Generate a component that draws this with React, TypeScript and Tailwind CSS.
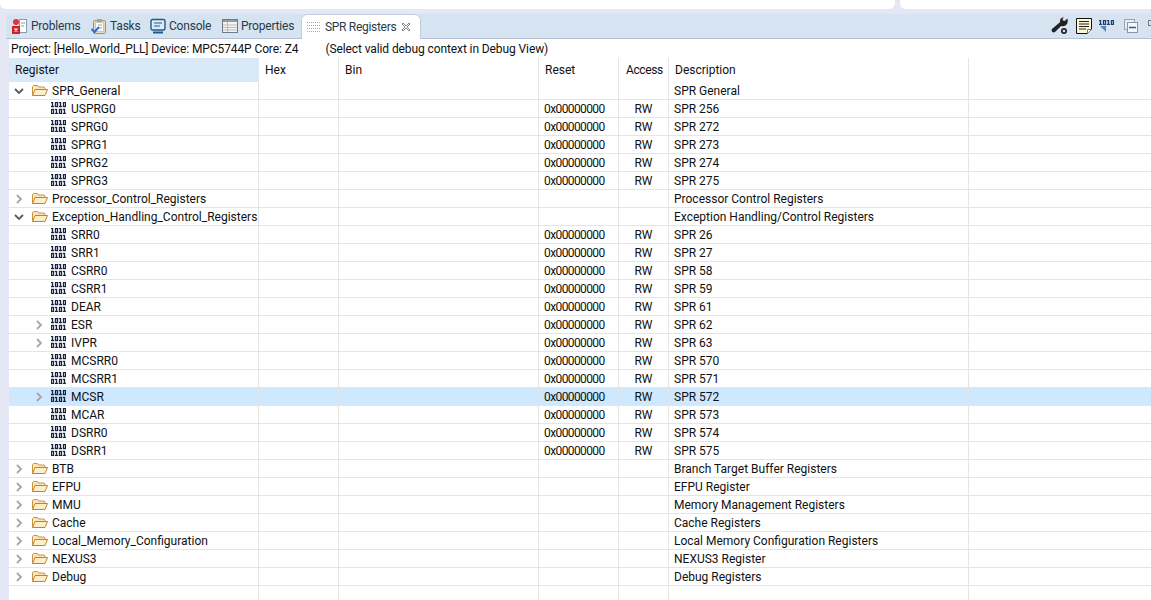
import type { ReactNode } from "react"

type Row = {
  name: string
  depth: 0 | 1
  open?: boolean
  arrow?: boolean
  reset?: string
  access?: string
  desc: string
  selected?: boolean
}

const reg = (name: string, spr: number, arrow?: boolean, selected?: boolean): Row => ({
  name,
  depth: 1,
  arrow,
  selected,
  reset: "0x00000000",
  access: "RW",
  desc: `SPR ${spr}`,
})

const group = (name: string, desc: string, open?: boolean): Row => ({ name, depth: 0, open, arrow: true, desc })

const rows: Row[] = [
  group("SPR_General", "SPR General", true),
  reg("USPRG0", 256),
  reg("SPRG0", 272),
  reg("SPRG1", 273),
  reg("SPRG2", 274),
  reg("SPRG3", 275),
  group("Processor_Control_Registers", "Processor Control Registers"),
  group("Exception_Handling_Control_Registers", "Exception Handling/Control Registers", true),
  reg("SRR0", 26),
  reg("SRR1", 27),
  reg("CSRR0", 58),
  reg("CSRR1", 59),
  reg("DEAR", 61),
  reg("ESR", 62, true),
  reg("IVPR", 63, true),
  reg("MCSRR0", 570),
  reg("MCSRR1", 571),
  reg("MCSR", 572, true, true),
  reg("MCAR", 573),
  reg("DSRR0", 574),
  reg("DSRR1", 575),
  group("BTB", "Branch Target Buffer Registers"),
  group("EFPU", "EFPU Register"),
  group("MMU", "Memory Management Registers"),
  group("Cache", "Cache Registers"),
  group("Local_Memory_Configuration", "Local Memory Configuration Registers"),
  group("NEXUS3", "NEXUS3 Register"),
  group("Debug", "Debug Registers"),
]

const Chevron = ({ open }: { open?: boolean }) => (
  <svg width="10" height="10" viewBox="0 0 10 10" fill="none" stroke={open ? "#5a5a5a" : "#a6a6a6"} strokeWidth="1.8">
    <path d={open ? "M1 3l4 4 4-4" : "M3 1l4 4-4 4"} />
  </svg>
)

const Folder = () => (
  <svg width="16" height="13" viewBox="0 0 16 13" className="shrink-0">
    <path d="M0.5 11.5V2.5l1-1h4l1 1.5h5.500l1 1v1.500" fill="#fbe6b8" stroke="#c9924a" />
    <path d="M0.500 11.500l2.500-6h12.500l-2.500 6z" fill="#fdeec8" stroke="#c4812f" strokeLinejoin="round" />
  </svg>
)

// 1010 / 0101 bitmap icon
const pattern = ["1010", "0101"]
const BitsIcon = ({ color = "#1c2640", rowsShown = pattern }: { color?: string; rowsShown?: string[] }) => (
  <svg
    width="15"
    height={rowsShown.length === 1 ? 5 : 12}
    viewBox={`0 0 15 ${rowsShown.length === 1 ? 5 : 12}`}
    className="shrink-0"
    fill={color}
    stroke={color}
    strokeWidth=".3"
  >
    {rowsShown.map((bits, r) =>
      bits.split("").map((bit, c) => {
        const x = c * 4
        const y = r * 7
        return bit === "1" ? (
          <g key={`${r}-${c}`}>
            <rect x={x + 1} y={y} width="1" height="5" />
            <rect x={x} y={y} width="1" height="1" />
            <rect x={x} y={y + 4} width="3" height="1" />
          </g>
        ) : (
          <g key={`${r}-${c}`}>
            <rect x={x} y={y} width="1" height="5" />
            <rect x={x + 2} y={y} width="1" height="5" />
            <rect x={x + 1} y={y} width="1" height="1" />
            <rect x={x + 1} y={y + 4} width="1" height="1" />
          </g>
        )
      })
    )}
  </svg>
)

const ProblemsIcon = () => (
  <svg width="17" height="16" viewBox="0 0 17 16" className="shrink-0">
    <rect x="8.500" y="1.500" width="7" height="13" fill="#fff" stroke="#8c99ad" />
    <path d="M10 5h4M10 8h3" stroke="#8c99ad" />
    <circle cx="5" cy="4" r="3" fill="#e0343a" />
    <rect x="1" y="8" width="8" height="8" fill="#c9242c" />
    <path d="M3.500 10.500l3 3M6.500 10.500l-3 3" stroke="#fff" strokeWidth="1.200" />
  </svg>
)

const TasksIcon = () => (
  <svg width="16" height="17" viewBox="0 0 16 17" className="shrink-0">
    <rect x="2.500" y="2.500" width="12" height="13" rx="1" fill="#e7d9bd" stroke="#a3906c" />
    <rect x="4.500" y="4.500" width="8" height="9" fill="#fbfbf8" stroke="#cfc6b2" />
    <rect x="6" y="1" width="5" height="3" fill="#9aa5b3" />
    <path d="M7 7h4M8 10h3" stroke="#9aa5b3" />
    <path d="M0.500 11l3 3 4.500-5" fill="none" stroke="#2b6fc6" strokeWidth="2" />
  </svg>
)

const ConsoleIcon = () => (
  <svg width="16" height="16" viewBox="0 0 16 16" className="shrink-0">
    <rect x="1" y="1.500" width="14" height="10.500" rx="1.500" fill="#dfeaf5" stroke="#1f5a92" strokeWidth="1.400" />
    <path d="M4 5h8M4 8h6" stroke="#1f5a92" />
    <path d="M3 14.500h10" stroke="#1f5a92" strokeWidth="2" />
  </svg>
)

const PropertiesIcon = () => (
  <svg width="16" height="14" viewBox="0 0 16 14" className="shrink-0">
    <rect x="0.500" y="0.500" width="15" height="13" fill="#f7f5f0" stroke="#6f7a8a" />
    <rect x="1" y="1" width="14" height="2" fill="#8e9cae" />
    <path d="M5.500 3v10M1 6h14M1 8.500h14M1 11h14" stroke="#b4bcc8" />
  </svg>
)

const Tab = ({ icon, label, className }: { icon: ReactNode; label: string; className: string }) => (
  <div className={`flex items-center gap-[3px] whitespace-nowrap shrink-0 tracking-[-0.2px] ${className}`}>
    {icon}
    <span>{label}</span>
  </div>
)

const WrenchIcon = () => (
  <svg width="18" height="18" viewBox="0 0 18 18" className="shrink-0">
    <path d="M16.500 1.500l-3 2.500-1.500-.5-.5-1.500 1.500-1.500c-2-.5-4 1-4 3 0 .8 .2 1.200 .2 1.500L1 12c-1.500 2 1 4.500 3 3l6-6c2.500 1 5.500-.5 6.500-3 .2-1 .3-3 0-4.500z" fill="#222" />
    <circle cx="13" cy="14" r="3" fill="#222" />
    <circle cx="13" cy="14" r="1.300" fill="#d6e2f0" />
  </svg>
)

const NoteIcon = () => (
  <svg width="16" height="17" viewBox="0 0 16 17" className="shrink-0">
    <path d="M0.500 0.500h15v11l-4 4h-11z" fill="#fdf9d8" stroke="#111" />
    <path d="M3 3.500h10M3 6h10M3 8.500h10M3 11h7" stroke="#222" />
    <path d="M11.500 15.500v-4h4" fill="#fff" stroke="#777" />
  </svg>
)

const MinimizeIcon = () => (
  <svg width="14" height="14" viewBox="0 0 14 14" className="shrink-0">
    <rect x="0.500" y="0.500" width="10" height="10" fill="#e8edf4" stroke="#9aa3b0" />
    <rect x="3.500" y="3.500" width="10" height="10" fill="#f4f7fb" stroke="#8b95a3" />
    <path d="M5 8.500h7" stroke="#2a5d9a" strokeWidth="1.500" />
  </svg>
)

const Cell = ({ className = "", children }: { className?: string; children?: ReactNode }) => (
  <div className={`border-r border-[#e5e5e5] overflow-hidden whitespace-nowrap ${className}`}>{children}</div>
)

const gridCols = "grid grid-cols-[250px_80px_200px_80px_50px_300px_1fr]"

export default function App() {
  return (
    <div
      className="h-[600px] w-[1151px] overflow-hidden bg-[#e5e8f4] flex flex-col text-[12px] leading-[16px] text-[#111]"
      style={{ fontFamily: 'Roboto, "Noto Sans", sans-serif' }}
    >
      <div className="h-[9px] flex gap-[5px] shrink-0">
        <div className="w-[895px] bg-white rounded-b-md" />
        <div className="flex-1 bg-white rounded-bl-md" />
      </div>

      <div className="flex-1 min-h-0 mt-[5px] ml-[6px] flex flex-col">
        <div className="h-[25px] shrink-0 bg-[#d6e3f1] border-b border-[#b5bfd4] rounded-tl-md flex items-center justify-between text-[#2a3a4a]">
          <div className="flex items-center h-full">
            <Tab icon={<ProblemsIcon />} label="Problems" className="pl-[5px] w-[80px]" />
            <Tab icon={<TasksIcon />} label="Tasks" className="pl-[5px] w-[59px]" />
            <Tab icon={<ConsoleIcon />} label="Console" className="pl-[5px] w-[72px]" />
            <Tab icon={<PropertiesIcon />} label="Properties" className="pl-[5px] w-[84px]" />
            <div className="h-[25px] -mb-px bg-white border border-b-0 border-[#c3cddf] rounded-t-md flex items-center gap-[3px] pl-[4px] w-[120px] whitespace-nowrap shrink-0 tracking-[-0.3px]">
              <svg width="16" height="12" viewBox="0 0 16 12" className="shrink-0">
                <path d="M1 1.500h14M1 10.500h14M1 4.500h14M1 7.500h14" stroke="#a9a9a9" strokeDasharray="1 1" />
              </svg>
              <span className="w-[73px] shrink-0">SPR Registers</span>
              <svg width="10" height="10" viewBox="0 0 10 10" className="shrink-0" fill="none" stroke="#8a8a8a">
                <path d="M1 2l1-1 3 3 3-3 1 1-3 3 3 3-1 1-3-3-3 3-1-1 3-3z" />
              </svg>
            </div>
          </div>
          <div className="flex items-center gap-[7px] -mr-[3px]">
            <WrenchIcon />
            <NoteIcon />
            <div className="flex flex-col items-center w-[15px] gap-[1px]">
              <BitsIcon rowsShown={["1010"]} color="#24406e" />
              <div className="w-0 h-0 self-start ml-[1px] border-t-[6px] border-l-[6px] border-t-[#4f86c6] border-l-transparent" />
            </div>
            <div className="ml-[3px]">
              <MinimizeIcon />
            </div>
            <div className="w-[6px] h-[6px] ml-[3px] mb-[6px] border border-[#777] shrink-0" />
          </div>
        </div>

        <div className="flex-1 min-h-0 bg-white ml-[3px] flex flex-col">
          <div className="h-[19px] shrink-0 flex items-center pl-[2px] tracking-[-0.1px]">
            <span>Project: [Hello_World_PLL] Device: MPC5744P Core: Z4</span>
            <span className="ml-[27px]">(Select valid debug context in Debug View)</span>
          </div>

          <div className={`${gridCols} h-[24px] shrink-0`}>
            <Cell className="bg-[#d9e9f7] border-r-0 pl-[6px] pt-[4px]">Register</Cell>
            <Cell className="pl-[6px] pt-[4px]">Hex</Cell>
            <Cell className="pl-[6px] pt-[4px]">Bin</Cell>
            <Cell className="pl-[6px] pt-[4px]">Reset</Cell>
            <Cell className="pl-[7px] pt-[4px] tracking-[-0.4px]">Access</Cell>
            <Cell className="pl-[6px] pt-[4px]">Description</Cell>
          </div>

          {rows.map((row) => (
            <div
              key={row.name}
              className={`${gridCols} h-[18px] shrink-0 border-b border-[#e5e5e5] ${row.selected ? "bg-[#cde8ff]" : ""}`}
            >
              <Cell className="flex items-center">
                <div className={`shrink-0 ${row.depth === 0 ? "w-[3px]" : "w-[23px]"}`} />
                <div className="w-[13px] shrink-0 flex justify-center">{row.arrow && <Chevron open={row.open} />}</div>
                <div className={`shrink-0 flex items-center ${row.depth === 0 ? "w-[27px] pl-[7px]" : "w-[27px] pl-[6px] pb-px"}`}>
                  {row.depth === 0 ? <Folder /> : <BitsIcon />}
                </div>
                <span className={row.depth === 0 ? "" : "-ml-px"}>{row.name}</span>
              </Cell>
              <Cell />
              <Cell />
              <Cell className="pl-[5px] leading-[19px] tracking-[-0.6px]">{row.reset}</Cell>
              <Cell className="text-center leading-[19px]">{row.access}</Cell>
              <Cell className="pl-[5px] leading-[19px]">{row.desc}</Cell>
            </div>
          ))}

          <div className={`${gridCols} flex-1`}>
            <Cell />
            <Cell />
            <Cell />
            <Cell />
            <Cell />
            <Cell />
          </div>
        </div>
      </div>
    </div>
  )
}
